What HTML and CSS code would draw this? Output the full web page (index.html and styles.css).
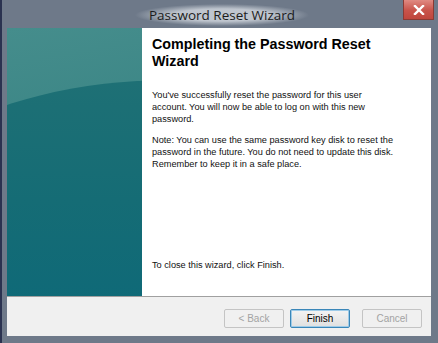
FILE: index.html
```html
<!DOCTYPE html>
<html>
<head>
<meta charset="utf-8">
<link rel="stylesheet" href="styles.css">
</head>
<body>
<div class="window">
  <div class="titlebar">
    <span class="title">Password Reset Wizard</span>
    <div class="close"><svg width="12" height="10" viewBox="0 0 12 10"><path d="M2 1 L10 9 M10 1 L2 9" stroke="#fff" stroke-width="2.4" stroke-linecap="square"/></svg></div>
  </div>
  <div class="client">
    <div class="main">
      <div class="banner"></div>
      <div class="content">
        <h1 class="heading">Completing the Password Reset Wizard</h1>
        <p class="text">You've successfully reset the password for this user account. You will now be able to log on with this new password.</p>
        <p class="text">Note: You can use the same password key disk to reset the password in the future. You do not need to update this disk. Remember to keep it in a safe place.</p>
        <p class="text closing">To close this wizard, click Finish.</p>
      </div>
    </div>
    <div class="footer">
      <button class="btn disabled">&lt; Back</button>
      <button class="btn primary">Finish</button>
      <button class="btn disabled cancel">Cancel</button>
    </div>
  </div>
</div>
</body>
</html>
```
FILE: styles.css
```css
html, body {
  margin: 0;
  padding: 0;
  width: 438px;
  height: 343px;
  overflow: hidden;
  background: #6e7989;
}
.window {
  width: 438px;
  height: 343px;
  box-sizing: border-box;
  display: flex;
  flex-direction: column;
  background: #6e7989;
  border-left: 2px solid #2a3250;
  position: relative;
}
.titlebar {
  height: 28px;
  display: flex;
  align-items: center;
  justify-content: center;
  flex: none;
}
.title {
  font-family: "Open Sans", "Noto Sans", sans-serif;
  font-size: 13.5px;
  color: #1c1c1c;
  padding: 2px 14px;
  margin-left: 4px;
  margin-top: 2px;
  background: radial-gradient(ellipse closest-side at center, rgba(200,206,214,0.9) 55%, rgba(160,168,180,0) 100%);
}
.close {
  position: absolute;
  top: 0;
  right: 4px;
  width: 31px;
  height: 20px;
  background: linear-gradient(#e08a82, #c8534a 55%, #bf463d);
  border: 1px solid #8a3a34;
  border-top: none;
  box-sizing: border-box;
  display: flex;
  align-items: center;
  justify-content: center;
}
.client {
  margin: 0 7px 7px 5px;
  flex: 1;
  display: flex;
  flex-direction: column;
  background: #f0f0f0;
}
.main {
  height: 268px;
  display: flex;
  border-bottom: 1px solid #a0a0a0;
  flex: none;
}
.banner {
  width: 135px;
  flex: none;
  position: relative;
  overflow: hidden;
  background: linear-gradient(170deg, #458d8c 0%, #3a8585 45%, #2f7d80 100%);
}
.banner::after {
  content: "";
  position: absolute;
  left: -174px;
  top: 52px;
  width: 674px;
  height: 400px;
  border-radius: 50%;
  background: linear-gradient(#1e7075, #156c75 30%, #0e6978 60%, #0d6879 100%);
}
.content {
  flex: 1;
  background: #fff;
  padding: 8px 10px 0 10px;
  display: flex;
  flex-direction: column;
}
.heading {
  font-family: "Liberation Sans", Arial, sans-serif;
  font-weight: bold;
  font-size: 14.3px;
  line-height: 17px;
  margin: 0 0 19px 0;
  color: #000;
  width: 265px;
}
.text {
  font-family: "Liberation Sans", Arial, sans-serif;
  font-size: 9.2px;
  line-height: 12px;
  margin: 0 0 9px 0;
  color: #111;
  width: 245px;
}
.closing {
  margin-top: auto;
  margin-bottom: 25px;
}
.footer {
  flex: 1;
  display: flex;
  align-items: center;
  justify-content: flex-end;
  padding: 3px 9px 0 0;
  gap: 6px;
}
.btn {
  width: 60px;
  height: 19px;
  font-family: "Liberation Sans", Arial, sans-serif;
  font-size: 10px;
  padding: 0;
  border: 1px solid #acacac;
  border-radius: 2px;
  background: #f0f0f0;
  color: #000;
}
.btn.disabled {
  color: #a3a3a3;
  border-color: #c4c4c4;
}
.btn.primary {
  border-color: #3a86b8;
  background: linear-gradient(#f3f3f3, #e0e0e0);
  box-shadow: inset 0 0 0 1px #9ecbe8;
}
.btn.cancel {
  margin-left: 6px;
}
```
